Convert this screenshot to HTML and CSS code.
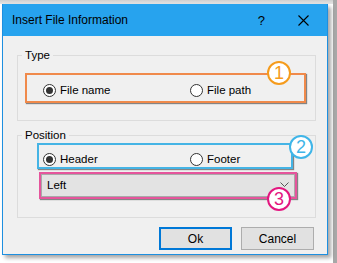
FILE: index.html
```html
<!DOCTYPE html>
<html lang="en">
<head>
    <meta charset="UTF-8">
    <title>Insert File Information</title>
    <link rel="stylesheet" href="styles.css">
</head>
<body>
    <div class="window">
        <!-- title bar -->
        <div class="titlebar">
            <span class="title">Insert File Information</span>
            <span class="help">?</span>
            <span class="close">
                <svg width="11" height="11" viewBox="0 0 11 11"><path d="M0.5 0.5 L10.5 10.5 M10.5 0.5 L0.5 10.5" stroke="#000" stroke-width="1.1" fill="none"/></svg>
            </span>
        </div>

        <div class="content">
            <fieldset class="group group-type">
                <legend>Type</legend>
                <div class="mark mark-orange">
                    <label class="radio radio-first"><span class="dot checked"></span>File name</label>
                    <label class="radio"><span class="dot"></span>File path</label>
                    <span class="badge badge-orange">1</span>
                </div>
            </fieldset>

            <fieldset class="group group-position">
                <legend>Position</legend>
                <div class="mark mark-blue">
                    <label class="radio radio-first"><span class="dot checked"></span>Header</label>
                    <label class="radio"><span class="dot"></span>Footer</label>
                    <span class="badge badge-blue">2</span>
                </div>
                <div class="mark mark-pink">
                    <div class="combo">
                        <span>Left</span>
                        <svg width="9" height="5" viewBox="0 0 9 5"><path d="M0.5 0.5 L4.5 4.5 L8.5 0.5" stroke="#555" stroke-width="1" fill="none"/></svg>
                    </div>
                    <span class="badge badge-pink">3</span>
                </div>
            </fieldset>

            <div class="buttons">
                <button class="btn btn-default">Ok</button>
                <button class="btn">Cancel</button>
            </div>
        </div>
    </div>
</body>
</html>
```

FILE: styles.css
```css
/* Base */
body {
    margin: 0;
    padding: 4px 0 0 0;
    font-family: "Liberation Sans", Arial, sans-serif;
    font-size: 11.5px;
    color: #000;
    background:
        linear-gradient(to right, transparent 333px, #a8a8a8 333px),
        linear-gradient(#cfcfcf, #e6e6e6 4px, #fff 4px);
    height: 263px;
    box-sizing: border-box;
    overflow: hidden;
}

/* Window frame */
.window {
    margin-left: 2px;
    width: 324px;
    border: 1px solid #1d8fe0;
    border-top: none;
    background: #f0f0f0;
    box-shadow: 3px 3px 4px rgba(0, 0, 0, 0.35);
}

.titlebar {
    height: 32px;
    background: #27a3ee;
    display: flex;
    align-items: center;
    padding: 0 18px 0 9px;
}

.title {
    font-size: 12px;
}

.help {
    margin-left: auto;
    font-size: 13px;
}

.close {
    margin-left: 33px;
    display: flex;
}

/* Dialog body */
.content {
    padding: 12px 11px 4px 14px;
}

.group {
    margin: 0;
    border: 1px solid #dcdcdc;
    min-width: 0;
}

.group legend {
    padding: 0 3px;
    margin-left: -3px;
    line-height: 14px;
}

.group-type {
    padding: 11px 9px 17px 7px;
}

.group-position {
    margin-top: 7px;
    padding: 1px 9px 18px 7px;
}

/* coloured highlight boxes */
.mark {
    position: relative;
    box-sizing: border-box;
    display: flex;
    box-shadow: 1px 1px 1px rgba(0, 0, 0, 0.45);
}

.mark-orange {
    height: 30px;
    border: 2px solid #f08a4b;
    align-items: center;
    padding: 5px 0 0 16px;
}

.mark-blue {
    margin-left: 12px;
    width: 256px;
    height: 26px;
    border: 2px solid #45b4e5;
    align-items: flex-end;
    padding: 0 0 1px 4px;
}

.mark-pink {
    margin: 3px 0 0 14px;
    width: 258px;
    height: 27px;
    border: 2px solid #e5559c;
}

.mark-blue .radio-first {
    min-width: 147px;
}

/* radio buttons */
.radio {
    display: flex;
    align-items: center;
    gap: 4px;
    line-height: 13px;
}

.radio-first {
    min-width: 147px;
}

.dot {
    width: 13px;
    height: 13px;
    box-sizing: border-box;
    border: 1px solid #333;
    border-radius: 50%;
    background: #fff;
    display: flex;
    align-items: center;
    justify-content: center;
}

.dot.checked::after {
    content: '';
    width: 7px;
    height: 7px;
    border-radius: 50%;
    background: #333;
}

/* numbered badges */
.badge {
    position: absolute;
    width: 24px;
    height: 24px;
    box-sizing: border-box;
    border: 2px solid;
    border-radius: 50%;
    background: #fff;
    font-size: 18px;
    line-height: 20px;
    text-align: center;
}

.badge-orange {
    color: #f59b1c;
    left: 240px;
    top: -14px;
}

.badge-blue {
    color: #3fb5e8;
    left: 250px;
    top: -10px;
}

.badge-pink {
    color: #e3167f;
    left: 226px;
    top: 13px;
}

/* combo box */
.combo {
    flex: 1;
    display: flex;
    align-items: center;
    justify-content: space-between;
    border: 1px solid #a9a9a9;
    background: #e3e3e3;
    padding: 0 5px 2px 5px;
}

/* buttons */
.buttons {
    display: flex;
    justify-content: flex-end;
    gap: 9px;
    margin-top: 9px;
    padding-right: 2px;
}

.btn {
    width: 73px;
    height: 23px;
    box-sizing: border-box;
    border: 1px solid #adadad;
    background: #e1e1e1;
    font-family: "Liberation Sans", Arial, sans-serif;
    font-size: 12px;
    color: #000;
    padding: 0;
}

.btn-default {
    border: 2px solid #0078d7;
}
```
